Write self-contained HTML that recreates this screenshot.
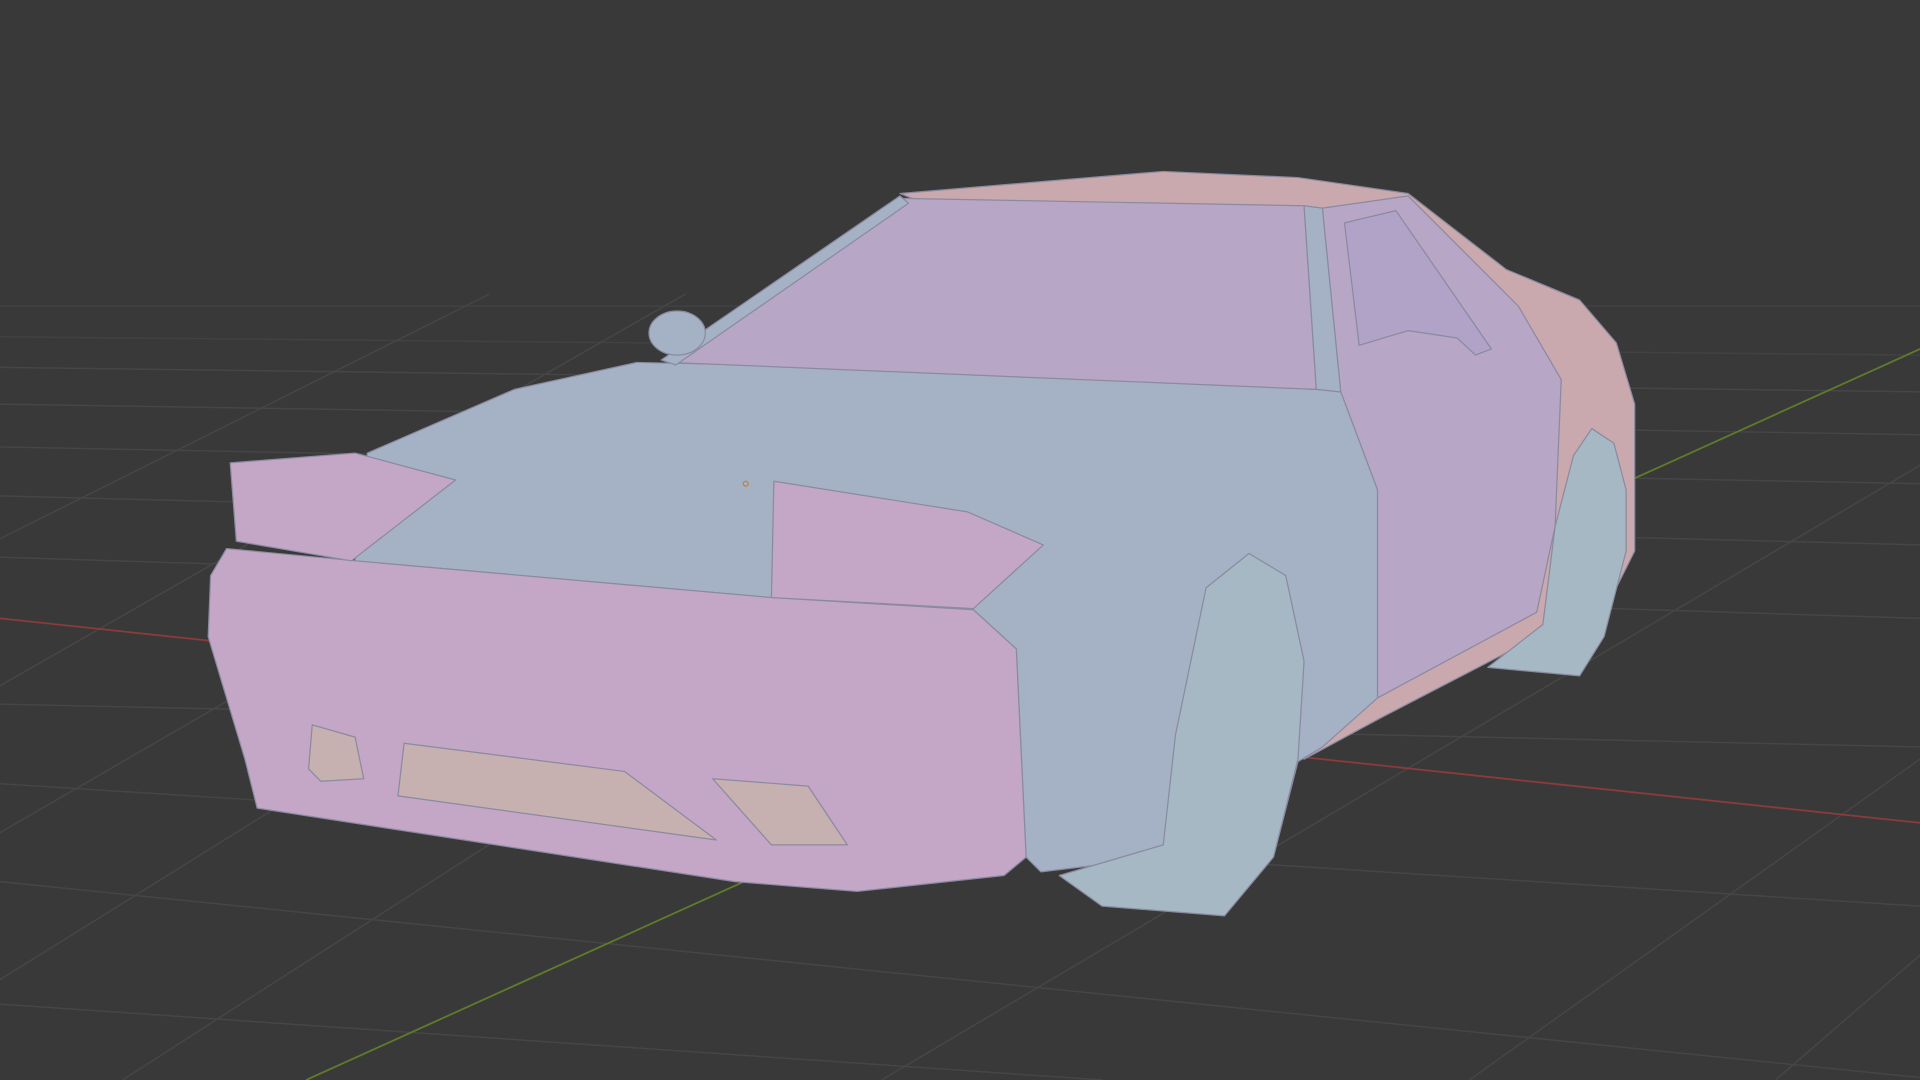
<!DOCTYPE html>
<html><head><meta charset="utf-8"><style>
html,body{margin:0;padding:0;width:1920px;height:1080px;overflow:hidden;background:#393939}
svg{display:block}
</style></head><body>
<svg width="1920" height="1080" viewBox="0 0 1568 882" preserveAspectRatio="none" xmlns="http://www.w3.org/2000/svg">
<rect width="1568" height="882" fill="#393939"/>
<g stroke="#464646" stroke-width="1.2" fill="none">
<line x1="0" y1="250" x2="1568" y2="250" stroke="#414141"/>
<line x1="0" y1="275" x2="1568" y2="290" stroke="#424242"/>
<line x1="0" y1="300" x2="1568" y2="320"/>
<line x1="0" y1="330" x2="1568" y2="355"/>
<line x1="0" y1="365" x2="1568" y2="395"/>
<line x1="0" y1="405" x2="1568" y2="445"/>
<line x1="0" y1="455" x2="1568" y2="505"/>
<line x1="0" y1="575" x2="1568" y2="610"/>
<line x1="0" y1="640" x2="1568" y2="740"/>
<line x1="0" y1="720" x2="1568" y2="880"/>
<line x1="0" y1="820" x2="900" y2="882"/>
<line x1="0" y1="680" x2="760" y2="240"/>
<line x1="0" y1="800" x2="900" y2="240"/>
<line x1="100" y1="882" x2="1100" y2="240"/>
<line x1="720" y1="882" x2="1568" y2="380"/>
<line x1="1200" y1="882" x2="1568" y2="620"/>
<line x1="1450" y1="882" x2="1568" y2="780"/>
<line x1="0" y1="560" x2="560" y2="240"/>
<line x1="0" y1="440" x2="400" y2="240"/>
</g>
<line x1="0" y1="505" x2="1568" y2="672" stroke="#8a3b3b" stroke-width="1.5"/>
<line x1="250" y1="882" x2="1568" y2="285" stroke="#5e7a2a" stroke-width="1.5"/>
<g stroke="#8a8aa0" stroke-width="1" stroke-linejoin="round">
<polygon fill="#c9a9ad" points="735,158 950,140 1060,145 1150,158 1230,220 1290,245 1320,280 1335,330 1335,450 1310,500 1265,515 1130,585 1065,620 1090,420 1080,300"/>
<polygon fill="#a5b2c5" points="300,370 420,318 520,296 700,300 1075,318 1095,320 1125,400 1125,570 1080,610 1060,622 1040,700 950,700 850,712 838,700 830,530 795,498 630,488 290,458"/>
<polygon fill="#b7a6c5" points="548,296 735,162 1065,168 1075,318"/>
<polygon fill="#a5b2c5" points="1065,168 1080,170 1095,320 1075,318"/>
<polygon fill="#a5b2c5" points="540,294 735,160 742,166 552,298"/>
<polygon fill="#b7a6c5" points="1080,170 1150,160 1240,250 1275,310 1270,430 1255,500 1125,570 1125,400 1095,320"/>
<polygon fill="#b0a3c7" points="1098,182 1140,172 1218,285 1205,290 1190,276 1150,270 1110,282"/>
<polygon fill="#a5b8c3" points="1300,350 1318,362 1328,400 1328,450 1310,520 1290,552 1215,545 1260,510 1270,430 1285,372"/>
<polygon fill="#a5b8c3" points="985,480 1020,452 1050,470 1065,540 1060,620 1040,700 1000,748 900,740 865,715 950,690 960,600"/>
<polygon fill="#c4a6c6" points="185,448 290,458 630,488 795,498 830,530 838,700 820,715 700,728 600,720 210,660 200,620 170,520 172,470"/>
<polygon fill="#c4a6c6" points="188,378 290,370 372,392 287,458 193,442"/>
<polygon fill="#c4a6c6" points="632,393 790,418 852,445 795,497 630,488"/>
<polygon fill="#c7b0b0" points="255,592 290,602 297,636 262,638 252,628"/>
<polygon fill="#c7b0b0" points="330,607 510,630 585,686 325,650"/>
<polygon fill="#c7b0b0" points="582,636 660,642 692,690 630,690"/>
<ellipse cx="553" cy="272" rx="23" ry="18" fill="#a5b2c5"/>
</g>
<circle cx="609" cy="395" r="2" fill="none" stroke="#d08020" stroke-width="1"/>
</svg>
</body></html>
